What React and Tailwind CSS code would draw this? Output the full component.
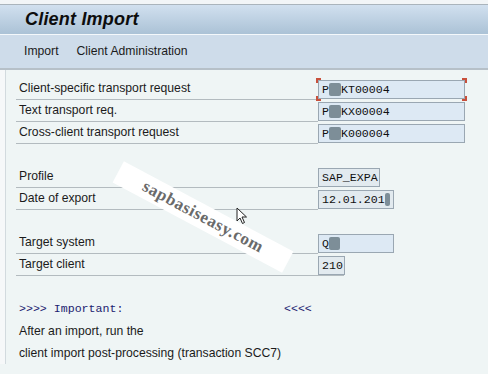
const labelRows = [
  { label: 'Client-specific transport request', value: 'KT00004', focus: true },
  { label: 'Text transport req.', value: 'KX00004' },
  { label: 'Cross-client transport request', value: 'K000004' },
]

const Blur = ({ w = 'w-[12px]' }) => (
  <span className={`inline-block ${w} h-[13px] bg-[#7d8e98] rounded-[2px] shrink-0`} />
)

const Field = ({ w, children, tone = 'blue', focus = false }) => (
  <div
    className={`relative ${w} h-[19px] border border-[#9aa7b2] ${tone === 'blue' ? 'bg-[#dde9f4]' : 'bg-[#e2eaef]'} flex items-center pl-[3px] text-[11.6px] text-[#111] leading-none`}
    style={{ fontFamily: '"Liberation Mono", monospace' }}
  >
    {children}
    {focus && (
      <>
        <span className="absolute -left-[3px] -top-[3px] w-[5px] h-[5px] border-l-2 border-t-2 border-[#c8503c]" />
        <span className="absolute -right-[3px] -top-[3px] w-[5px] h-[5px] border-r-2 border-t-2 border-[#c8503c]" />
        <span className="absolute -left-[3px] -bottom-[3px] w-[5px] h-[5px] border-l-2 border-b-2 border-[#c8503c]" />
        <span className="absolute -right-[3px] -bottom-[3px] w-[5px] h-[5px] border-r-2 border-b-2 border-[#c8503c]" />
      </>
    )}
  </div>
)

const Row = ({ label, children, lineTo = 'w-[302px]' }) => (
  <div className="flex h-[22px]">
    <div className={`${lineTo} h-full border-b border-[#b3bbbf] flex items-center pl-[3px]`}>{label}</div>
    <div className="flex items-start pt-[2px]">{children}</div>
  </div>
)

const App = () => {
  return (
    <div
      className="relative w-[488px] h-[374px] overflow-hidden bg-[#eff5f5] text-[12.2px] text-[#1b1b1b]"
      style={{ fontFamily: '"Liberation Sans", Arial, sans-serif' }}
    >
      <div className="h-[5px] bg-[#f2f5f7] border-b border-[#aab4bc]" />
      <div className="flex h-[30px] items-center pl-[25px] bg-gradient-to-b from-[#d1e0ef] to-[#abc2d6] border-b border-[#f4f8fb]">
        <span className="text-[18px] font-bold italic text-[#0d0d0d] tracking-[0.2px]">Client Import</span>
      </div>
      <div className="flex h-[35px] items-center gap-[18px] pl-[24px] bg-[#cedcea] border-b-2 border-[#b6c0c8]">
        <span>Import</span>
        <span>Client Administration</span>
      </div>

      <div className="flex">
        <div className="w-[6px] bg-[#f6f8f9] border-r border-[#d2dade]" />
        <div className="pl-[10px] pt-[8px] flex-1">
          {labelRows.map((r) => (
            <Row key={r.label} label={r.label}>
              <Field w="w-[147px]" focus={r.focus}>
                P<Blur w="w-[12px]" />{r.value}
              </Field>
            </Row>
          ))}
          <div className="h-[22px]" />
          <Row label="Profile">
            <Field w="w-[62px]" tone="gray">SAP_EXPA</Field>
          </Row>
          <Row label="Date of export">
            <Field w="w-[76px]" tone="gray">12.01.201<Blur w="w-[5px]" /></Field>
          </Row>
          <div className="h-[22px]" />
          <Row label="Target system">
            <Field w="w-[76px]">Q<Blur w="w-[11px]" /></Field>
          </Row>
          <Row label="Target client" lineTo="w-[328px]">
            <div className="-ml-[328px] pl-[302px]">
              <Field w="w-[27px]" tone="gray">210</Field>
            </div>
          </Row>
          <div className="h-[22px]" />
          <div
            className="flex h-[22px] items-center pl-[3px] text-[11.6px] text-[#1c2270]"
            style={{ fontFamily: '"Liberation Mono", monospace' }}
          >
            <span className="w-[265px]">&gt;&gt;&gt;&gt; Important:</span>
            <span>&lt;&lt;&lt;&lt;</span>
          </div>
          <div className="flex h-[22px] items-center pl-[3px]">After an import, run the</div>
          <div className="flex h-[22px] items-center pl-[3px]">client import post-processing (transaction SCC7)</div>
        </div>
      </div>

      {/* watermark */}
      <div className="absolute left-[107px] top-[205px] w-[192px] h-[24px] bg-white rotate-[28deg] flex items-center justify-center">
        <span
          className="text-[17px] font-bold text-[#6a6a6a] tracking-[0.6px]"
          style={{ fontFamily: '"Liberation Serif", serif' }}
        >
          sapbasiseasy.com
        </span>
      </div>

      {/* mouse cursor */}
      <svg className="absolute left-[236px] top-[207px]" width="12" height="18" viewBox="0 0 12 18">
        <path d="M1 1 L1 14 L4 11 L6.5 16.5 L8.5 15.5 L6 10 L10.5 10 Z" fill="#fff" stroke="#222" strokeWidth="1" />
      </svg>
    </div>
  )
}

export default App
